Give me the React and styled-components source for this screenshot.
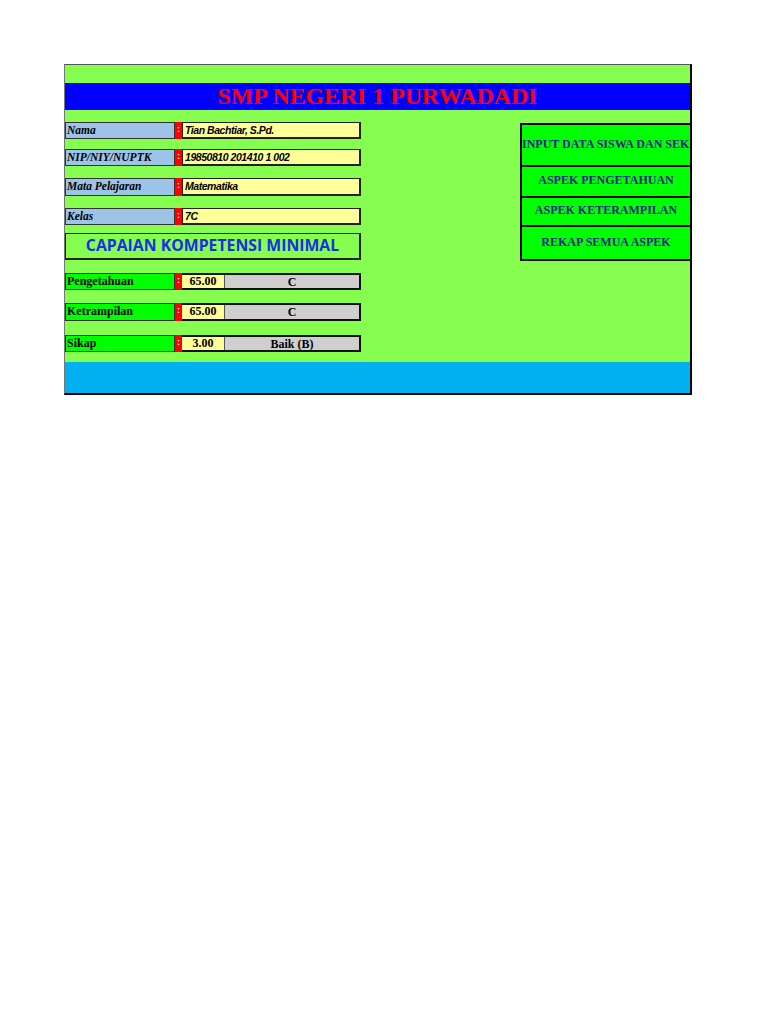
import React from "react";
import styled, { createGlobalStyle } from "styled-components";

const Global = createGlobalStyle`
  html, body { margin: 0; padding: 0; background: #ffffff; }
  body { font-family: "Liberation Serif", "Times New Roman", serif; }
`;

const Frame = styled.div`
  margin: 64px 0 0 64px;
  width: 625px;
  border-top: 1px solid #555;
  border-left: 1px solid #777;
  border-right: 2px solid #000;
  border-bottom: 2px solid #000;
  background: #85fe50;
  display: flex;
  flex-direction: column;
`;

const TitleBar = styled.div`
  margin-top: 18px;
  height: 27px;
  background: #0000ff;
  color: #ff0000;
  font-family: "Liberation Serif", serif;
  font-weight: bold;
  font-size: 23.8px;
  line-height: 26px;
  text-align: center;
  white-space: nowrap;
`;

const Body = styled.div`
  display: flex;
  justify-content: space-between;
  align-items: flex-start;
`;

const LeftCol = styled.div`
  width: 296px;
  display: flex;
  flex-direction: column;
`;

const Row = styled.div`
  display: flex;
  height: ${(p) => p.$h || 17}px;
  margin-top: ${(p) => p.$mt}px;
`;

const Label = styled.div`
  width: 110px;
  box-sizing: border-box;
  border: 1px solid #333;
  background: ${(p) => (p.$green ? "#00ff00" : "#9dc3e6")};
  font-family: "Liberation Serif", serif;
  font-weight: bold;
  font-style: ${(p) => (p.$green ? "normal" : "italic")};
  font-size: ${(p) => (p.$green ? 12 : 11.5)}px;
  line-height: 15px;
  padding-left: 1px;
  white-space: nowrap;
  color: #000;
`;

const Colon = styled.div`
  width: 7px;
  background: #ff0000;
  color: #fff;
  font-family: "Liberation Sans", sans-serif;
  font-weight: bold;
  font-size: 9px;
  line-height: 15px;
  text-align: center;
`;

const Value = styled.div`
  flex: 1;
  box-sizing: border-box;
  border: 1px solid #222;
  border-right-width: 2px;
  border-bottom-width: 2px;
  background: #ffff99;
  font-family: "Liberation Sans", Arial, sans-serif;
  font-style: italic;
  font-weight: bold;
  font-size: 10.5px;
  letter-spacing: -0.45px;
  line-height: 14px;
  padding-left: 2px;
  color: #000;
  white-space: nowrap;
`;

const ScoreWrap = styled.div`
  flex: 1;
  display: flex;
  box-sizing: border-box;
  border: 2px solid #111;
  border-left: none;
`;

const Score = styled.div`
  width: 42px;
  background: #ffff99;
  font-family: "Liberation Serif", serif;
  font-weight: bold;
  font-size: 12px;
  line-height: 13px;
  text-align: center;
  border-right: 1px solid #555;
`;

const Grade = styled.div`
  flex: 1;
  background: #d0cece;
  font-family: "Liberation Serif", serif;
  font-weight: bold;
  font-size: 12px;
  line-height: 15px;
  text-align: center;
`;

const CapBox = styled.div`
  margin-top: 8px;
  height: 27px;
  box-sizing: border-box;
  border: 1px solid #222;
  border-right-width: 2px;
  border-bottom-width: 2px;
  color: #1a2fe6;
  font-family: "Open Sans", sans-serif;
  font-weight: bold;
  font-size: 15.8px;
  line-height: 23px;
  text-align: center;
  white-space: nowrap;
`;

const RightCol = styled.div`
  margin-top: 13px;
  width: 170px;
  display: flex;
  flex-direction: column;
`;

const NavButton = styled.div`
  height: ${(p) => p.$h}px;
  box-sizing: border-box;
  background: #00ff00;
  border: 2px solid #000;
  border-right: none;
  margin-top: ${(p) => (p.$first ? 0 : -2)}px;
  padding-bottom: 2px;
  color: #1e1e8c;
  font-family: "Liberation Serif", serif;
  font-weight: bold;
  font-size: 12px;
  display: flex;
  align-items: center;
  justify-content: ${(p) => (p.$left ? "flex-start" : "center")};
  white-space: nowrap;
  overflow: hidden;
`;

const Footer = styled.div`
  margin-top: 10px;
  height: 31px;
  background: #00b0f0;
`;

const info = [
  { label: "Nama", value: "Tian Bachtiar, S.Pd.", mt: 12, h: 17 },
  { label: "NIP/NIY/NUPTK", value: "19850810 201410 1 002", mt: 10, h: 17 },
  { label: "Mata Pelajaran", value: "Matematika", mt: 12, h: 18 },
  { label: "Kelas", value: "7C", mt: 12, h: 17 },
];

const scores = [
  { label: "Pengetahuan", score: "65.00", grade: "C", mt: 13, h: 17 },
  { label: "Ketrampilan", score: "65.00", grade: "C", mt: 13, h: 18 },
  { label: "Sikap", score: "3.00", grade: "Baik (B)", mt: 14, h: 17 },
];

const buttons = [
  { text: "INPUT DATA SISWA DAN SEKOLAH", h: 44, left: true },
  { text: "ASPEK PENGETAHUAN", h: 33 },
  { text: "ASPEK KETERAMPILAN", h: 31 },
  { text: "REKAP SEMUA ASPEK", h: 36 },
];

export default function App() {
  return (
    <>
      <Global />
      <Frame>
        <TitleBar>SMP NEGERI 1 PURWADADI</TitleBar>
        <Body>
          <LeftCol>
            {info.map((r) => (
              <Row key={r.label} $mt={r.mt} $h={r.h}>
                <Label>{r.label}</Label>
                <Colon>:</Colon>
                <Value>{r.value}</Value>
              </Row>
            ))}
            <CapBox>CAPAIAN KOMPETENSI MINIMAL</CapBox>
            {scores.map((r) => (
              <Row key={r.label} $mt={r.mt} $h={r.h}>
                <Label $green>{r.label}</Label>
                <Colon>:</Colon>
                <ScoreWrap>
                  <Score>{r.score}</Score>
                  <Grade>{r.grade}</Grade>
                </ScoreWrap>
              </Row>
            ))}
          </LeftCol>
          <RightCol>
            {buttons.map((b, i) => (
              <NavButton key={b.text} $h={b.h} $first={i === 0} $left={b.left}>
                {b.text}
              </NavButton>
            ))}
          </RightCol>
        </Body>
        <Footer />
      </Frame>
    </>
  );
}
